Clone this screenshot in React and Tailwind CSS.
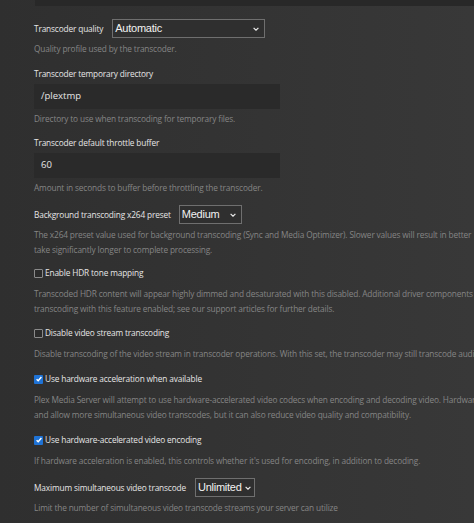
import React from 'react';

const font = { fontFamily: '"Open Sans", "Noto Sans", sans-serif' };

function Chevron() {
  return (
    <svg viewBox="0 0 10 6" className="w-[6px] h-[4px] shrink-0" fill="none" stroke="#e8e8e8" strokeWidth="2">
      <path d="M1 1l4 4 4-4" />
    </svg>
  );
}

function Select({ value, w, pr = 'pr-[5px]' }) {
  return (
    <div className={`flex items-center justify-between h-[19px] border border-[#6f6f6f] bg-[#2f2f2f] pl-[2px] ${pr} ${w}`}>
      <span style={{ fontFamily: '"Liberation Sans", Arial, sans-serif' }} className="text-[11px] leading-none text-[#f2f2f2] tracking-[-0.25px]">{value}</span>
      <Chevron />
    </div>
  );
}

function Box({ checked }) {
  if (checked) {
    return (
      <span className="w-[9px] h-[9px] rounded-[1px] bg-[#1f73d6] flex items-center justify-center shrink-0">
        <svg viewBox="0 0 10 10" className="w-[8px] h-[8px]" fill="none" stroke="#fff" strokeWidth="1.8">
          <path d="M2 5.2l2 2 4-4.6" />
        </svg>
      </span>
    );
  }
  return <span className="w-[9px] h-[9px] rounded-[1px] border border-[#8a8a8a] bg-[#2b2b2b] shrink-0" />;
}

const label = 'text-[8.3px] leading-[12px] text-[#e6e6e6] font-medium tracking-[-0.15px] whitespace-nowrap';
const desc = 'text-[8.3px] leading-[15px] text-[#858585] tracking-[-0.15px] whitespace-nowrap';

function Check({ checked, title, lines, mt }) {
  return (
    <div className={mt}>
      <div className="flex items-center gap-[2px]">
        <Box checked={checked} />
        <span className={label}>{title}</span>
      </div>
      <div className="mt-[7px]">
        {lines.map((l) => (
          <div key={l} className={desc}>{l}</div>
        ))}
      </div>
    </div>
  );
}

export default function App() {
  return (
    <div style={font} className="w-[474px] h-[523px] overflow-hidden bg-gradient-to-r from-[#2f2f2f] to-[#383838]">
      <div className="ml-[35px] h-[6px] bg-[#282828]" />
      <div className="pl-[34px]">
        <div className="flex items-center gap-[9px] mt-[13px]">
          <span className={label}>Transcoder quality</span>
          <Select value="Automatic" w="w-[153px]" />
        </div>
        <div className={`${desc} mt-[3px]`}>Quality profile used by the transcoder.</div>

        <div className={`${label} mt-[12px]`}>Transcoder temporary directory</div>
        <div className="mt-[4px] w-[246px] h-[25px] bg-[#2a2a2a] flex items-center pl-[7px] text-[9.5px] text-[#e6e6e6]">/plextmp</div>
        <div className={`${desc} mt-[2px]`}>Directory to use when transcoding for temporary files.</div>

        <div className={`${label} mt-[11px]`}>Transcoder default throttle buffer</div>
        <div className="mt-[4px] w-[246px] h-[25px] bg-[#2a2a2a] flex items-center pl-[7px] text-[9.5px] text-[#e6e6e6]">60</div>
        <div className={`${desc} mt-[2px]`}>Amount in seconds to buffer before throttling the transcoder.</div>

        <div className="flex items-center gap-[8px] mt-[10px]">
          <span className={label}>Background transcoding x264 preset</span>
          <Select value="Medium" w="w-[63px]" />
        </div>
        <div className="mt-[3px]">
          <div className={desc}>The x264 preset value used for background transcoding (Sync and Media Optimizer). Slower values will result in better</div>
          <div className={desc}>take significantly longer to complete processing.</div>
        </div>

        <Check
          mt="mt-[10px]"
          title="Enable HDR tone mapping"
          lines={[
            'Transcoded HDR content will appear highly dimmed and desaturated with this disabled. Additional driver components',
            'transcoding with this feature enabled; see our support articles for further details.',
          ]}
        />
        <Check
          mt="mt-[11px]"
          title="Disable video stream transcoding"
          lines={['Disable transcoding of the video stream in transcoder operations. With this set, the transcoder may still transcode audi']}
        />
        <Check
          mt="mt-[12px]"
          checked
          title="Use hardware acceleration when available"
          lines={[
            'Plex Media Server will attempt to use hardware-accelerated video codecs when encoding and decoding video. Hardwar',
            'and allow more simultaneous video transcodes, but it can also reduce video quality and compatibility.',
          ]}
        />
        <Check
          mt="mt-[12px]"
          checked
          title="Use hardware-accelerated video encoding"
          lines={["If hardware acceleration is enabled, this controls whether it's used for encoding, in addition to decoding."]}
        />

        <div className="flex items-center gap-[9px] mt-[10px]">
          <span className={label}>Maximum simultaneous video transcode</span>
          <Select value="Unlimited" w="w-[60px]" pr="pr-[3px]" />
        </div>
        <div className={`${desc} mt-[3px]`}>Limit the number of simultaneous video transcode streams your server can utilize</div>
      </div>
    </div>
  );
}
